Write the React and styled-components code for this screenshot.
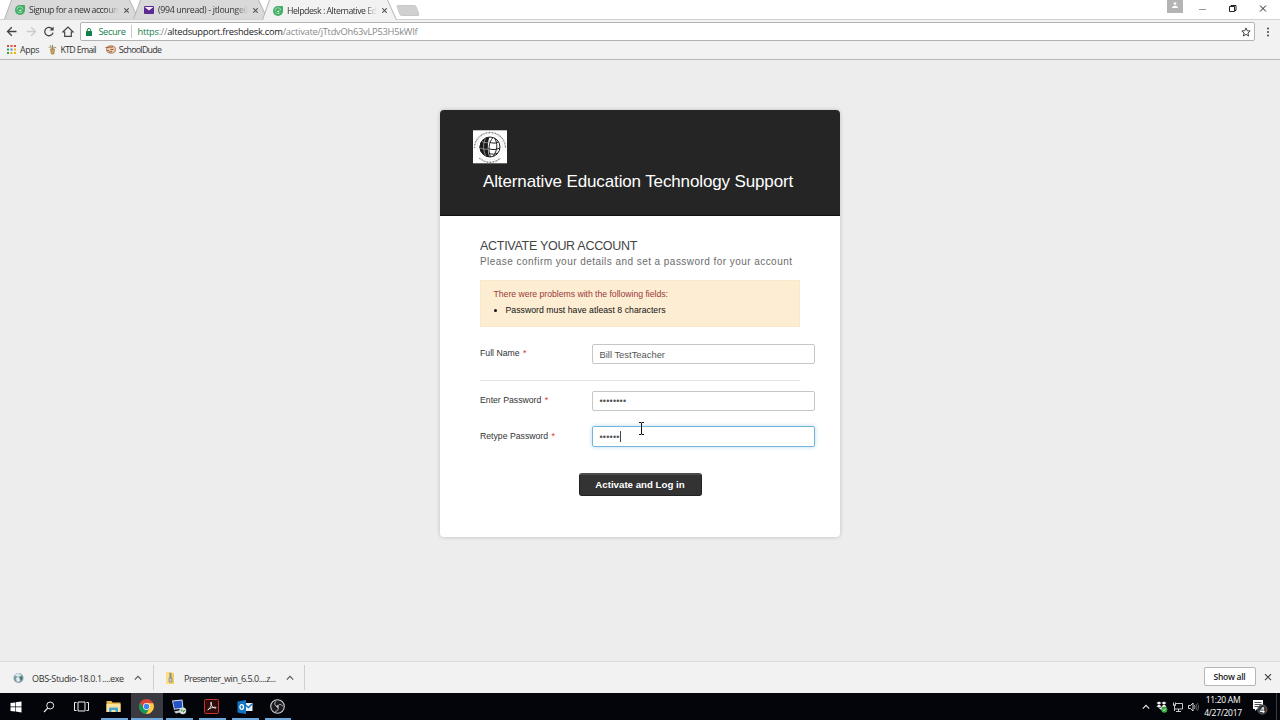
import React from 'react'
import styled, { createGlobalStyle, css } from 'styled-components'

const GlobalStyle = createGlobalStyle`
  * {
    box-sizing: border-box;
  }
  body {
    margin: 0;
    background: #ededed;
    overflow: hidden;
  }
  svg {
    display: block;
    flex: none;
  }
`

const Screen = styled.div`
  width: 1280px;
  height: 720px;
  display: flex;
  flex-direction: column;
  font-family: 'Open Sans', 'Noto Sans', sans-serif;
  font-size: 9px;
  color: #333;
`

/* browser chrome */
const TabStrip = styled.div`
  height: 19px;
  flex: none;
  display: flex;
  padding-left: 4px;
  background: #fff;
`
const Tab = styled.div`
  position: relative;
  z-index: ${p => (p.$active ? 2 : 1)};
  width: 135px;
  height: ${p => (p.$active ? 20 : 19)}px;
  margin-right: -6px;
  padding: 1px 0 0 11px;
  display: flex;
  align-items: center;
  flex: none;

  &::before,
  &::after {
    content: '';
    position: absolute;
    inset: 0;
    z-index: -1;
    background: #b4b4b4;
    clip-path: polygon(0 100%, 7px 0, calc(100% - 9px) 0, 100% 100%);
  }
  &::after {
    inset: 0 1px;
    background: ${p => (p.$active ? '#f2f2f2' : '#d9d9d9')};
  }
`
const TabTitle = styled.span`
  width: 90px;
  margin: 0 4.500px 0 4px;
  white-space: nowrap;
  line-height: 14px;
  font-size: 8.8px;
  letter-spacing: ${p => p.$ls || 0}px;
  mask-image: linear-gradient(90deg, #000 86%, transparent 100%);
`
const NewTab = styled.div`
  width: 20px;
  height: 11px;
  margin: 5px 0 0 7px;
  background: #d0d0d0;
  border: 1px solid #c8c8c8;
  border-radius: 2px;
  transform: skewX(20deg);
`
const WindowButtons = styled.div`
  margin-left: auto;
  display: flex;
  align-items: center;
  height: 17px;
  padding-right: 11px;
`
const Profile = styled.div`
  width: 16px;
  height: 13px;
  margin: 0 16px 4px 0;
  background: #b4b4b4;
  display: flex;
  justify-content: center;
  padding-top: 2px;
`
const Toolbar = styled.div`
  height: 24px;
  flex: none;
  display: flex;
  align-items: center;
  padding-left: 6px;
  background: #f2f2f2;
  border-top: 1px solid #d2d2d2;
`
const NavButton = styled.span`
  width: 18.6px;
  flex: none;
  display: flex;
`
const AddressBar = styled.div`
  width: 1175px;
  flex: none;
  height: 19px;
  display: flex;
  align-items: center;
  padding: 0 3px 0 5px;
  background: #fff;
  border: 1px solid #b3b3b3;
  border-radius: 2px;
  font-size: 9.3px;
  white-space: nowrap;
`
const Secure = styled.span`
  margin-left: 6px;
  padding-right: 6px;
  border-right: 1px solid #c9c9c9;
  line-height: 13px;
  color: #17804d;
  letter-spacing: -0.4px;
`
const Url = styled.span`
  margin-left: 5px;
  flex: 1;
  line-height: 14px;
  color: #888;
  letter-spacing: -0.25px;
  b {
    font-weight: 400;
    color: #222;
  }
  i {
    font-style: normal;
    color: #17804d;
  }
`
const Bookmarks = styled.div`
  height: 17px;
  flex: none;
  display: flex;
  align-items: center;
  padding: 0 0 3px 7px;
  background: #f2f2f2;
  border-bottom: 1px solid #b8b8b8;
`
const Bookmark = styled.span`
  display: flex;
  align-items: center;
  gap: ${p => p.$gap || 4}px;
  margin-right: 9px;
  line-height: 14px;
  font-size: 8.8px;
  letter-spacing: ${p => p.$ls}px;
`

/* page */
const Page = styled.main`
  flex: 1;
  padding-top: 50px;
  background: #ededed;
  font-family: 'Liberation Sans', Arial, sans-serif;
`
const Card = styled.div`
  width: 400px;
  height: 427px;
  margin: 0 auto;
  background: #fff;
  border-radius: 4px;
  box-shadow: 0 0 4px rgba(0, 0, 0, 0.2);
`
const CardHeader = styled.header`
  height: 106px;
  padding: 20px 0 0 33px;
  background: #252525;
  border-bottom: 1px solid #111;
  border-radius: 4px 4px 0 0;
`
const PortalName = styled.h1`
  margin: 7px 0 0 10px;
  font-size: 17px;
  font-weight: 400;
  line-height: 22px;
  letter-spacing: -0.13px;
  color: #fff;
  white-space: nowrap;
`
const CardBody = styled.form`
  padding: 22px 40px 0;
`
const Heading = styled.h2`
  margin: 0;
  font-size: 12.5px;
  font-weight: 400;
  line-height: 16px;
  letter-spacing: -0.29px;
  color: #444;
`
const SubHeading = styled.p`
  margin: 0;
  font-size: 10px;
  line-height: 15px;
  letter-spacing: 0.45px;
  color: #6c6c6c;
  white-space: nowrap;
`
const ErrorBox = styled.div`
  height: 47px;
  margin-top: 11px;
  padding: 6px 12.500px;
  background: #fdedd3;
  border: 1px solid #fbe7ca;
  font-size: 8.7px;
  line-height: 15.500px;
  letter-spacing: -0.03px;
  color: #993b3b;
  ul {
    margin: 0;
    padding-left: 12px;
    letter-spacing: 0.03px;
    color: #111;
  }
`
const Row = styled.div`
  display: flex;
  height: 21px;
  margin-top: ${p => p.$top}px;
  width: 335px;
`
const Label = styled.label`
  width: 112px;
  flex: none;
  font-size: 8.7px;
  line-height: ${p => p.$lh || 18}px;
  color: #333;
  em {
    margin-left: 1px;
    font-style: normal;
    color: #d33;
  }
`
const Field = styled.div`
  flex: 1;
  height: 20px;
  display: flex;
  align-items: center;
  padding: 0 6.500px;
  border: 1px solid #c6c6c6;
  border-radius: 2px;
  font-size: 9.4px;
  color: #555;
  ${p => p.$focused && css`
    height: 21px;
    border-color: #78b4d8;
    box-shadow: 0 0 4px rgba(110, 185, 225, 0.5);
  `}
`
const Dots = styled.span`
  font-size: 9px;
  letter-spacing: 0.2px;
`
const Caret = styled.span`
  width: 1px;
  height: 11px;
  background: #444;
`
const Divider = styled.hr`
  margin: 15px 0 0;
  border: 0;
  border-top: 1px solid #e5e5e5;
`
const Submit = styled.button`
  display: block;
  width: 123px;
  height: 23px;
  margin: 26px 0 0 98.500px;
  padding: 0;
  border: 1px solid #222;
  border-top: 2px solid #4c4c4c;
  border-radius: 3px;
  background: #333;
  color: #fff;
  font: bold 9.7px/18px 'Liberation Sans', Arial, sans-serif;
`
const Pointer = styled.svg`
  position: absolute;
  left: 638px;
  top: 422px;
`

/* download shelf */
const Shelf = styled.div`
  height: 32px;
  flex: none;
  display: flex;
  align-items: center;
  background: #f2f2f2;
  border-top: 1px solid #dcdcdc;
`
const Download = styled.div`
  height: 25px;
  width: ${p => p.$width}px;
  display: flex;
  align-items: center;
  padding: 0 0 0 ${p => p.$left}px;
  border-right: 1px solid #cfcfcf;
  white-space: nowrap;
`
const FileName = styled.span`
  width: 93px;
  margin: 2px 9px 0 8px;
  letter-spacing: ${p => p.$ls}px;
`
const ShowAll = styled.button`
  width: 52px;
  height: 19px;
  margin: 0 7.500px 2px auto;
  padding: 0;
  border: 1px solid #b5b5b5;
  border-radius: 2px;
  background: #fff;
  color: #222;
  font: 600 8.5px/16px 'Open Sans', sans-serif;
  letter-spacing: -0.28px;
`

/* taskbar */
const Taskbar = styled.footer`
  height: 27px;
  flex: none;
  display: flex;
  background: #04050a;
`
const TaskButton = styled.div`
  width: 32.700px;
  display: flex;
  align-items: center;
  justify-content: center;
  position: relative;
  background: ${p => (p.$active ? '#3a3b42' : 'none')};
  ${p => p.$open && css`
    &::after {
      content: '';
      position: absolute;
      left: ${p.$active ? 0 : 3}px;
      right: ${p.$active ? 0 : 3}px;
      bottom: 0;
      height: 2px;
      background: #6fa9dc;
    }
  `}
  svg {
    margin-right: 1px;
  }
`
const Tray = styled.div`
  margin-left: auto;
  display: flex;
  align-items: center;
  padding-right: 3px;
`
const Clock = styled.div`
  width: 40px;
  margin: 0 9px 0 2px;
  color: #fff;
  font-size: 8.5px;
  line-height: 12.5px;
  letter-spacing: -0.3px;
  text-align: center;
  white-space: nowrap;
`
const DesktopEdge = styled.div`
  width: 1px;
  height: 27px;
  margin-left: 8px;
  background: #3c3c40;
`

const Freshdesk = () => (
  <svg width="10" height="10" viewBox="0 0 10 10">
    <path d="M5 0h4a1 1 0 0 1 1 1v4a5 5 0 1 1-5-5z" fill="#3fae63" />
    <path d="M2 5a3 3 0 0 1 6-.5M2.3 6.2c1 2 4 2 5 .2" fill="none" stroke="#a5dcb5" strokeWidth="1" />
    <path d="M3.600 5.400l3-1.400-1 2.600z" fill="#e3f6e9" />
  </svg>
)
const Mail = () => (
  <svg width="10" height="8" viewBox="0 0 10 8">
    <rect width="10" height="8" rx="1" fill="#5b2b91" />
    <path d="M.5 1L5 4.6 9.5 1z" fill="#f2ecf7" />
  </svg>
)
const Cross = ({ size = 5, color = '#555', width = 1.1 }) => (
  <svg width={size} height={size} viewBox="0 0 10 10">
    <path d="M.5.5l9 9M9.5.5l-9 9" stroke={color} strokeWidth={width * 10 / size} />
  </svg>
)
const Chevron = ({ color }) => (
  <svg width="8" height="8" viewBox="0 0 8 8">
    <path d="M.8 5.6L4 2.4l3.2 3.2" fill="none" stroke={color} strokeWidth="1.1" />
  </svg>
)

function BrowserTop() {
  return (
    <>
      <TabStrip>
        <Tab>
          <Freshdesk />
          <TabTitle $ls={-0.5}>Signup for a new account</TabTitle>
          <Cross />
        </Tab>
        <Tab>
          <Mail />
          <TabTitle $ls={-0.32}>(994 unread) - jtlounge@</TabTitle>
          <Cross />
        </Tab>
        <Tab $active>
          <Freshdesk />
          <TabTitle $ls={-0.5}>Helpdesk : Alternative Ed</TabTitle>
          <Cross />
        </Tab>
        <NewTab />
        <WindowButtons>
          <Profile>
            <svg width="6" height="6" viewBox="0 0 6 6" fill="#fff">
              <circle cx="3" cy="1.6" r="1.4" />
              <path d="M0 6c0-3 6-3 6 0z" />
            </svg>
          </Profile>
          <svg width="70" height="9" viewBox="0 0 70 9" fill="none">
            <path d="M0 5.500h7" stroke="#999" />
            <path d="M30.500 2.500h5v5h-5zM32 2.500v-1h5v5h-1" stroke="#222" />
            <path d="M61 1.500l6 6M67 1.500l-6 6" stroke="#222" />
          </svg>
        </WindowButtons>
      </TabStrip>
      <Toolbar>
        <NavButton>
          <svg width="11" height="11" viewBox="0 0 11 11" fill="none" stroke="#444" strokeWidth="1.3">
            <path d="M10.5 5.5H2M5.8 1.2L1.5 5.5l4.3 4.3" />
          </svg>
        </NavButton>
        <NavButton>
          <svg width="11" height="11" viewBox="0 0 11 11" fill="none" stroke="#ccc" strokeWidth="1.3">
            <path d="M1.5 5.5H10M6.2 1.2l4.3 4.3-4.3 4.3" />
          </svg>
        </NavButton>
        <NavButton>
          <svg width="12" height="11" viewBox="0 0 12 11">
            <path d="M9.3 3A4.2 4.2 0 1 0 10 6.6" fill="none" stroke="#444" strokeWidth="1.3" />
            <path d="M10.6.6v4H6.6z" fill="#444" />
          </svg>
        </NavButton>
        <NavButton>
          <svg width="12" height="11" viewBox="0 0 12 11">
            <path d="M.8 6L6 1l5.200 5H9.300v4.300H2.700V6z" fill="none" stroke="#444" strokeWidth="1.2" />
          </svg>
        </NavButton>
        <AddressBar>
          <svg width="6" height="8" viewBox="0 0 6 8">
            <rect y="3" width="6" height="5" rx=".5" fill="#0f8048" />
            <path d="M1.300 3V2.200a1.700 1.700 0 0 1 3.400 0V3" fill="none" stroke="#0f8048" strokeWidth="1" />
          </svg>
          <Secure>Secure</Secure>
          <Url><i>https</i>://<b>altedsupport.freshdesk.com</b>/activate/jTtdvOh63vLP53H5kWIf</Url>
          <svg width="10" height="10" viewBox="0 0 10 10">
            <path d="M5 .9l1.200 2.800 3 .3-2.300 2 .7 3L5 7.400 2.400 9l.7-3L.8 4l3-.3z" fill="none" stroke="#444" strokeWidth="1" />
          </svg>
        </AddressBar>
        <svg width="22" height="10" viewBox="0 0 22 10" fill="#444">
          <circle cx="13" cy="1.500" r="1" />
          <circle cx="13" cy="5" r="1" />
          <circle cx="13" cy="8.500" r="1" />
        </svg>
      </Toolbar>
      <Bookmarks>
        <Bookmark $ls={-0.4}>
          <svg width="9" height="9" viewBox="0 0 9 9">
            <path d="M0 0h2v2H0zM3.500 0h2v2h-2zM7 0h2v2H7z" fill="#dd4b3e" />
            <path d="M0 3.500h2v2H0z" fill="#2ba24c" />
            <path d="M3.500 3.500h2v2h-2z" fill="#4285f4" />
            <path d="M7 3.500h2v2H7zM3.500 7h2v2h-2zM7 7h2v2H7z" fill="#eeb211" />
            <path d="M0 7h2v2H0z" fill="#2ba24c" />
          </svg>
          Apps
        </Bookmark>
        <Bookmark $ls={-0.65} $gap={3.5}>
          <svg width="9" height="11" viewBox="0 0 9 11">
            <path d="M2.500 5h4l-.7 5H3.300z" fill="#d3a655" stroke="#86682d" strokeWidth=".6" />
            <path d="M4.500 5C3 3 2 3 .8 3.400M4.500 5V.8M4.500 5C5.500 3 7 3 8.200 3.800" fill="none" stroke="#92875c" />
            <path d="M2 1.500l1.500 1" stroke="#99793d" />
          </svg>
          KTD Email
        </Bookmark>
        <Bookmark $ls={-0.7} $gap={3}>
          <svg width="11" height="9" viewBox="0 0 11 9">
            <ellipse cx="6" cy="4.500" rx="4.500" ry="3.700" fill="#e9cbb0" stroke="#a0694a" strokeWidth=".8" />
            <path d="M.5 2.500L8 2M2 5.500h2M5.500 4.500h3M4 7l3-.5" fill="none" stroke="#96522f" strokeWidth=".9" />
          </svg>
          SchoolDude
        </Bookmark>
      </Bookmarks>
    </>
  )
}

const Logo = () => (
  <svg width="34" height="34" viewBox="0 0 34 34">
    <rect width="34" height="33" y=".3" fill="#fff" />
    <path d="M1.500 18a15.500 15.500 0 0 1 31 0" fill="none" stroke="#777" strokeWidth="1.300" strokeDasharray="1.100 .7 .6 .5" />
    <path d="M6.500 28a15 15 0 0 0 21 0" fill="none" stroke="#777" strokeWidth="1.300" strokeDasharray="1.100 .7 .6 .5" />
    <circle cx="17" cy="17" r="13" fill="none" stroke="#e0e0e0" strokeWidth=".5" />
    <circle cx="17" cy="17" r="10" fill="#fff" stroke="#222" strokeWidth="1" />
    <path d="M16.500 7a10 10 0 0 0 0 20c-2.200-6-2.200-14 0-20z" fill="#1b1b1b" />
    <path d="M20 7.500c-4.500 5-5 13-2.500 19.500M21.500 8c3.500 5 3 13-1.500 18.500M16.500 12c3 1.500 6 1.500 9 0M15 18.500c4 1.500 8 1.500 12-.5M16 23.500c3 1 6 1 8.500-.5" fill="none" stroke="#222" strokeWidth="1" />
    <path d="M9 11.500c2.500 1.300 5 1.500 7 1M7.200 18c3 1.300 6 1.500 9 1M12.500 8.500c-2.500 5-2.500 11 0 17" fill="none" stroke="#bbb" strokeWidth=".7" />
  </svg>
)

function Activation() {
  return (
    <Page>
      <Card>
        <CardHeader>
          <Logo />
          <PortalName>Alternative Education Technology Support</PortalName>
        </CardHeader>
        <CardBody>
          <Heading>ACTIVATE YOUR ACCOUNT</Heading>
          <SubHeading>Please confirm your details and set a password for your account</SubHeading>
          <ErrorBox>
            There were problems with the following fields:
            <ul>
              <li>Password must have atleast 8 characters</li>
            </ul>
          </ErrorBox>
          <Row $top={17}>
            <Label>Full Name <em>*</em></Label>
            <Field>Bill TestTeacher</Field>
          </Row>
          <Divider />
          <Row $top={10}>
            <Label>Enter Password <em>*</em></Label>
            <Field><Dots>••••••••</Dots></Field>
          </Row>
          <Row $top={14}>
            <Label $lh={20}>Retype Password <em>*</em></Label>
            <Field $focused><Dots>••••••</Dots><Caret /></Field>
          </Row>
          <Submit type="button">Activate and Log in</Submit>
        </CardBody>
      </Card>
      <Pointer width="7" height="13" viewBox="0 0 7 13">
        <path d="M1 .5h2l.5.5.5-.5h2M3.500 1v11M1 12.500h2l.5-.5.5.5h2" fill="none" stroke="#111" />
      </Pointer>
    </Page>
  )
}

function Downloads() {
  return (
    <Shelf>
      <Download $width={154} $left={12}>
        <svg width="12" height="12" viewBox="0 0 12 12">
          <circle cx="6.500" cy="6" r="5" fill="#7e9da5" />
          <path d="M2 3l4-2 4 2-4 2z" fill="#d8e5e8" />
          <path d="M4 6l3-1 1 4-3 1z" fill="#e9eff0" />
          <path d="M7.500 5.500l3-1-1 4z" fill="#39706f" />
        </svg>
        <FileName $ls={-0.34}>OBS-Studio-18.0.1....exe</FileName>
        <Chevron color="#555" />
      </Download>
      <Download $width={151} $left={10}>
        <svg width="12" height="12" viewBox="0 0 12 12">
          <path d="M2 0h5l1 1h2v11H2z" fill="#f3cf63" />
          <path d="M2 0h3v12H2z" fill="#f9de8b" />
          <path d="M5.500 1h2v5h-2z" fill="#8b8f96" />
          <path d="M5 6h3v4H5z" fill="#c3c6c9" stroke="#777" strokeWidth=".6" />
        </svg>
        <FileName $ls={-0.48}>Presenter_win_6.5.0....z...</FileName>
        <Chevron color="#555" />
      </Download>
      <ShowAll>Show all</ShowAll>
      <svg width="17" height="10" viewBox="0 0 17 10">
        <path d="M2 1.200l6 6M8 1.200l-6 6" stroke="#444" strokeWidth="1.200" />
      </svg>
    </Shelf>
  )
}

function WindowsBar() {
  return (
    <Taskbar>
      <TaskButton>
        <svg width="12" height="12" viewBox="0 0 12 12" fill="#fff">
          <path d="M.5 2L5 1.400v4.200H.5zM5.600 1.300L11.500.5v5.100H5.600zM.5 6.200H5v4.300L.5 9.900zM5.600 6.200h5.900v5.200l-5.900-.8z" />
        </svg>
      </TaskButton>
      <TaskButton>
        <svg width="12" height="12" viewBox="0 0 12 12" fill="none" stroke="#eee">
          <circle cx="7.200" cy="4.500" r="3.500" />
          <path d="M4.700 7.200L1 11" strokeWidth="1.200" />
        </svg>
      </TaskButton>
      <TaskButton>
        <svg width="15" height="11" viewBox="0 0 15 11" fill="none" stroke="#eee">
          <path d="M4 1h7v9H4zM2.500 1.500h-2v8h2M12.500 1.500h2v8h-2" />
        </svg>
      </TaskButton>
      <TaskButton $open>
        <svg width="15" height="13" viewBox="0 0 15 13">
          <path d="M.5 1h5l1 1.500h8V12H.5z" fill="#e9b94d" />
          <path d="M.5 4h14v8H.5z" fill="#fbe49a" />
          <path d="M3 12V8.500q0-1 1-1h7q1 0 1 1V12h-2.500v-2h-4v2z" fill="#48a5d6" />
        </svg>
      </TaskButton>
      <TaskButton $open $active>
        <svg width="15" height="15" viewBox="0 0 16 16">
          <circle cx="8" cy="8" r="8" fill="#db4437" />
          <path d="M1.100 4A8 8 0 0 0 7.500 16l3.700-6-3.200 1.500L4.800 9.700z" fill="#0f9d58" />
          <path d="M7.500 16A8 8 0 0 0 15 4.500H8l3.200 5.500z" fill="#ffcd40" />
          <circle cx="8" cy="8" r="3.700" fill="#f5f5f5" />
          <circle cx="8" cy="8" r="2.900" fill="#4285f4" />
        </svg>
      </TaskButton>
      <TaskButton $open>
        <svg width="16" height="16" viewBox="0 0 16 16">
          <path d="M1 1.500L11.500.5l1 9-9.500 1.200z" fill="#dbe4f1" />
          <path d="M2 2.400l8.700-.9.8 7.200-7.900 1z" fill="#2454c4" />
          <path d="M3 12.500l7-1.500 1 2-6 1.500z" fill="#c6cbd1" />
          <circle cx="11.800" cy="11.800" r="3.400" fill="#d9e4d8" />
          <path d="M10 12l1.300-1.300M12 13l1.800-1.800" stroke="#3c8b4b" strokeWidth="1.200" />
        </svg>
      </TaskButton>
      <TaskButton $open>
        <svg width="15" height="15" viewBox="0 0 15 15">
          <rect x=".5" y=".5" width="14" height="14" rx="1" fill="#310c0c" stroke="#c5352f" />
          <path d="M3.500 11c2-.5 4-4 4-7 0-1.500-1-1-.8 0 .5 3 2.300 5 4.800 5.200 1 0 .8-1-.5-1-2 0-5 .8-7 2.300" fill="none" stroke="#eee" strokeWidth=".9" />
        </svg>
      </TaskButton>
      <TaskButton $open>
        <svg width="16" height="14" viewBox="0 0 16 14">
          <path d="M8 3h7.500v8H8z" fill="#e6f0f8" />
          <path d="M8.500 5l3 2.500L15 4" fill="none" stroke="#0f70bf" strokeWidth="1.300" />
          <path d="M.5 1.500L9 0v14L.5 12.500z" fill="#1275c5" />
          <ellipse cx="4.700" cy="7" rx="1.800" ry="2.300" fill="none" stroke="#fff" strokeWidth="1.300" />
        </svg>
      </TaskButton>
      <TaskButton $open>
        <svg width="15" height="15" viewBox="0 0 15 15" fill="none" stroke="#cfcfcf">
          <circle cx="7.500" cy="7.500" r="6.800" fill="#1c1c20" strokeWidth="1.100" />
          <path d="M7.500 7.500C4.500 7 4 4 6 2.300M7.500 7.500c1-2.700 4.200-2.700 5-.2M7.500 7.500c1.800 2.200.3 4.800-2.300 4.800" strokeWidth=".9" />
          <circle cx="7.500" cy="7.500" r=".8" fill="#cfcfcf" />
        </svg>
      </TaskButton>
      <Tray>
        <Chevron color="#eee" />
        <svg width="51" height="12" viewBox="0 0 51 12">
          <path d="M6.500 2l2.500-1.500L11.500 2 9 3.600zM11.500 2L14 .5 16.500 2 14 3.600zM6.500 5.200L9 3.600l2.500 1.600L9 6.800zM11.500 5.200L14 3.600l2.500 1.600L14 6.800zM9 7.500l2.500-1.600L14 7.500l-2.500 1.600z" fill="#f3f3f3" />
          <circle cx="14.300" cy="8.700" r="3" fill="#35ac3f" />
          <path d="M13 8.700l1 1 1.700-2" fill="none" stroke="#fff" strokeWidth=".8" />
          <path d="M26 2.500h6.500V8H25M28.500 8v2.500M26 10.500h5M23.500 1.500v3M25.500 1.500v3M23 4h3M24.500 4v6" fill="none" stroke="#ddd" strokeWidth=".9" />
          <path d="M38.500 4.500h2L43 2v8l-2.500-2.500h-2z" fill="none" stroke="#eee" strokeWidth=".9" />
          <path d="M44.500 4q1 2 0 4" fill="none" stroke="#ccc" strokeWidth=".8" />
          <path d="M46 3q2 3 0 6M47.500 2q2.500 4 0 8" fill="none" stroke="#777" strokeWidth=".7" />
        </svg>
        <Clock>
          11:20 AM<br />4/27/2017
        </Clock>
        <svg width="16" height="17" viewBox="0 0 16 17">
          <path d="M1 2h10v9H5l-2 2v-2H1z" fill="#fff" />
          <path d="M2.500 4.500h7M2.500 6.500h7M2.500 8.500h5" stroke="#222" strokeWidth=".8" />
          <circle cx="10.300" cy="11.500" r="4.700" fill="#33343a" stroke="#77797d" strokeWidth=".7" />
          <text x="10.300" y="14.500" textAnchor="middle" fontFamily="Open Sans, sans-serif" fontSize="8.500" fontWeight="600" fill="#fff">4</text>
        </svg>
        <DesktopEdge />
      </Tray>
    </Taskbar>
  )
}

export default function App() {
  return (
    <Screen>
      <GlobalStyle />
      <BrowserTop />
      <Activation />
      <Downloads />
      <WindowsBar />
    </Screen>
  )
}
